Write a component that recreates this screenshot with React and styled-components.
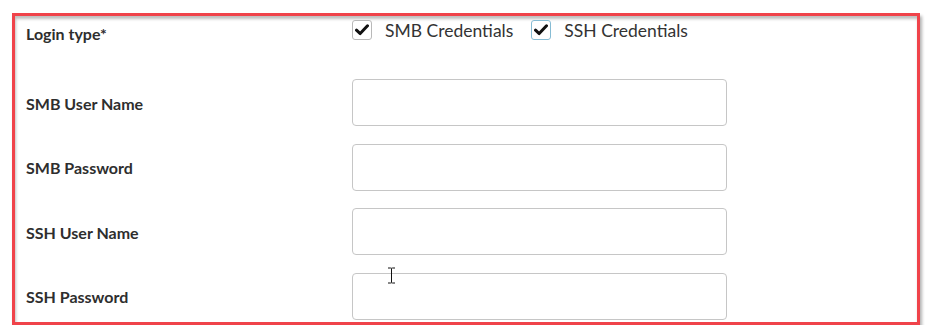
import React from "react";
import styled, { createGlobalStyle } from "styled-components";

const GlobalStyle = createGlobalStyle`
  html, body {
    margin: 0;
    padding: 0;
    background: #fff;
  }
  body {
    font-family: Lato, "Open Sans", "Liberation Sans", sans-serif;
    color: #333;
  }
`;

const Frame = styled.div`
  position: relative;
  box-sizing: border-box;
  width: 908px;
  height: 312px;
  margin: 13px 0 0 12px;
  border: 3px solid #f0434a;
  box-shadow: 2px 3px 3px rgba(0, 0, 0, 0.3),
    inset 1px 3px 3px rgba(0, 0, 0, 0.25);
  padding: 4px 0 0 11px;
`;

const Form = styled.div`
  display: grid;
  grid-template-columns: 326px 375px;
  align-items: center;
`;

const Label = styled.div`
  font-size: 16px;
  font-weight: 700;
  line-height: 18px;
  color: #2e2e2e;
  align-self: ${(p) => (p.$top ? "start" : "center")};
  padding-top: ${(p) => (p.$top ? "5px" : "2px")};
  margin-bottom: ${(p) => (p.$last ? "0" : "17.5px")};
`;

const Options = styled.div`
  align-self: start;
  display: flex;
  align-items: flex-start;
  height: 59px;
`;

const Option = styled.label`
  display: flex;
  align-items: center;
  height: 20px;
  margin-right: 18px;
  font-size: 17.5px;
  color: #333;
  cursor: pointer;
`;

const Box = styled.span`
  box-sizing: border-box;
  width: 20px;
  height: 20px;
  margin-right: 13px;
  border: 1px solid ${(p) => (p.$focus ? "#86bcd4" : "#b9b9b9")};
  border-radius: 3px;
  background: #fff;
  display: flex;
  align-items: center;
  justify-content: center;
`;

const Input = styled.input`
  box-sizing: border-box;
  width: 375px;
  height: 47px;
  margin: 0 0 ${(p) => (p.$last ? "0" : "17.5px")} 0;
  border: 1px solid #c6c6c6;
  border-radius: 4px;
  background: #fff;
  outline: none;
  padding: 0 10px;
  font: inherit;
`;

const Cursor = styled.svg`
  position: absolute;
  left: 372px;
  top: 251px;
`;

const Check = () => (
  <svg width="14" height="12" viewBox="0 0 14 12">
    <path
      d="M1.5 6.2 L5.2 9.6 L12.5 1.8"
      fill="none"
      stroke="#111"
      strokeWidth="3"
      strokeLinecap="round"
      strokeLinejoin="round"
    />
  </svg>
);

const fields = [
  "SMB User Name",
  "SMB Password",
  "SSH User Name",
  "SSH Password",
];

export default function App() {
  return (
    <>
      <GlobalStyle />
      <Frame>
        <Form>
          <Label $top>Login type*</Label>
          <Options>
            <Option>
              <Box>
                <Check />
              </Box>
              SMB Credentials
            </Option>
            <Option>
              <Box $focus>
                <Check />
              </Box>
              SSH Credentials
            </Option>
          </Options>
          {fields.map((f, i) => (
            <React.Fragment key={f}>
              <Label $last={i === fields.length - 1}>{f}</Label>
              <Input
                $last={i === fields.length - 1}
                type={f.includes("Password") ? "password" : "text"}
              />
            </React.Fragment>
          ))}
        </Form>
        <Cursor width="9" height="17" viewBox="0 0 9 17">
          <path
            d="M1 1 H3.5 M5.5 1 H8 M4.5 1.5 V15.5 M1 16 H3.5 M5.5 16 H8 M3.5 1 Q4.5 1.5 5.5 1 M3.5 16 Q4.5 15.5 5.5 16"
            fill="none"
            stroke="#111"
            strokeWidth="1"
          />
        </Cursor>
      </Frame>
    </>
  );
}
